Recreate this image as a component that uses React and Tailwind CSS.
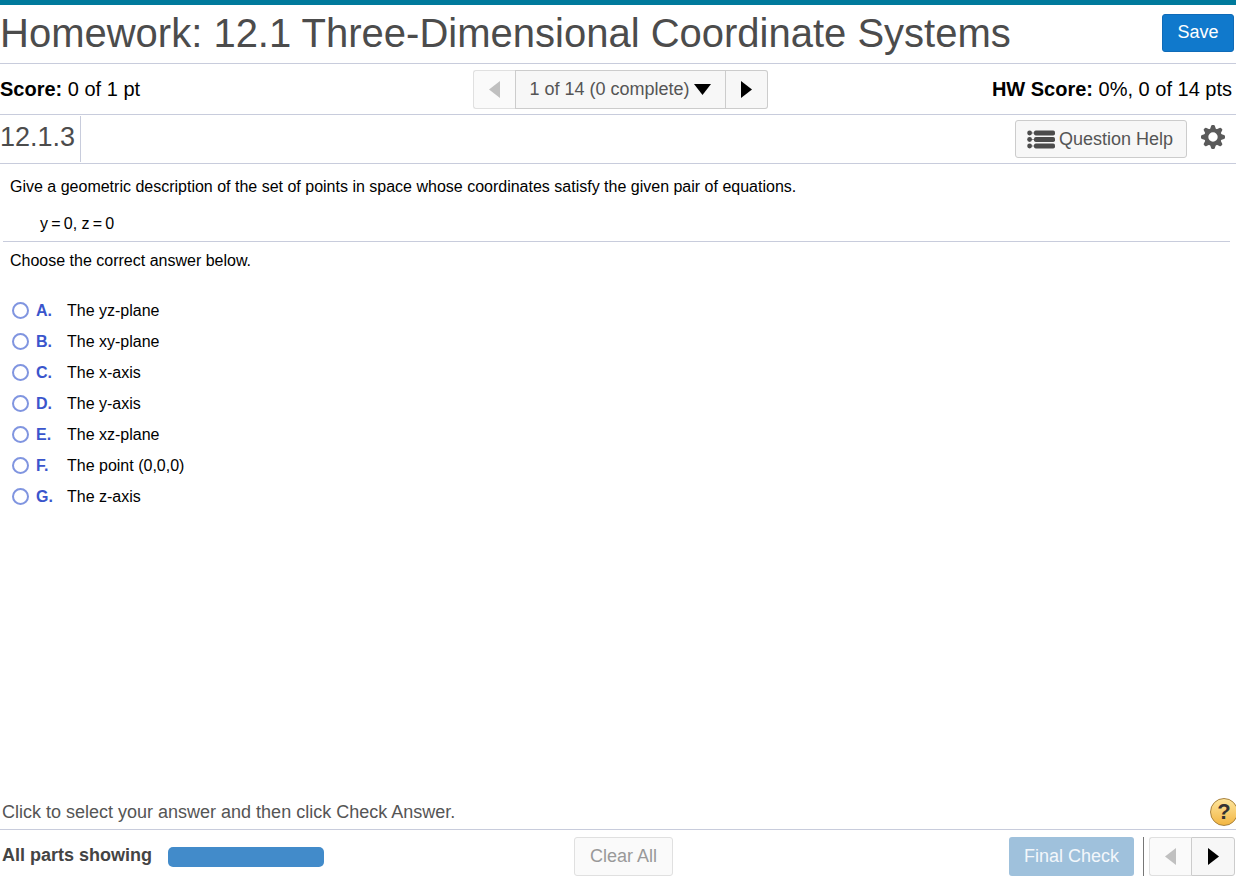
const choices = [
  { letter: "A", text: "The yz-plane" },
  { letter: "B", text: "The xy-plane" },
  { letter: "C", text: "The x-axis" },
  { letter: "D", text: "The y-axis" },
  { letter: "E", text: "The xz-plane" },
  { letter: "F", text: "The point (0,0,0)" },
  { letter: "G", text: "The z-axis" },
];

function Triangle({ direction, className = "" }) {
  const points = {
    left: "11,0 11,17 0,8.5",
    right: "0,0 0,17 11,8.5",
    down: "0,0 17,0 8.5,11",
  }[direction];
  const down = direction === "down";
  return (
    <svg
      aria-hidden="true"
      width={down ? 17 : 11}
      height={down ? 11 : 17}
      className={className}
      fill="currentColor"
    >
      <polygon points={points} />
    </svg>
  );
}

function ListIcon() {
  return (
    <svg aria-hidden="true" width="28" height="19" viewBox="0 0 28 19" fill="#4c4c4c">
      {[3, 9.5, 16].map((y) => (
        <g key={y}>
          <circle cx="2.6" cy={y} r="2.4" />
          <rect x="3" y={y - 0.5} width="5" height="1" opacity="0.6" />
          <rect x="7" y={y - 2.5} width="21" height="5" rx="1.8" />
        </g>
      ))}
    </svg>
  );
}

function GearIcon() {
  return (
    <svg aria-hidden="true" width="24" height="24" viewBox="-12 -12 24 24" fill="#5a5a5a">
      {[0, 45, 90, 135, 180, 225, 270, 315].map((a) => (
        <path
          key={a}
          transform={`rotate(${a})`}
          d="M-3.2-7L-1.9-11Q-1.6-12-0.8-12H0.8Q1.6-12 1.9-11L3.2-7Z"
        />
      ))}
      <path
        fillRule="evenodd"
        d="M0-8.8A8.8 8.8 0 1 1 0 8.8A8.8 8.8 0 1 1 0-8.8ZM0-4.7A4.7 4.7 0 1 0 0 4.7A4.7 4.7 0 1 0 0-4.7Z"
      />
    </svg>
  );
}

export default function App() {
  return (
    <div className="flex min-h-screen flex-col overflow-x-hidden border-t-5 border-[#007a9c] bg-white font-['Liberation_Sans',Arial,sans-serif] text-black">
      <header className="flex items-center justify-between border-b border-[#c8ccdc] pt-[9px] pr-0.5 pb-[11px]">
        <h1 className="text-[40px] leading-[38px] text-[#4c4c4c]">
          Homework: 12.1 Three-Dimensional Coordinate Systems
        </h1>
        <button className="h-[38px] w-[72px] shrink-0 rounded-[3px] border border-[#0f6bb8] bg-[#1079cc] pb-0.5 text-lg text-white">
          Save
        </button>
      </header>

      <section className="grid grid-cols-[1fr_auto_1fr] items-center border-b border-[#c8ccdc] pt-1.5 pb-[5px]">
        <p className="pb-0.5 text-xl leading-6">
          <b>Score:</b> 0 of 1 pt
        </p>
        <nav aria-label="Questions" className="flex pl-1">
          <button
            disabled
            aria-label="Previous question"
            className="flex h-[39px] w-[42px] items-center justify-center rounded-l-[3px] border border-r-0 border-[#e0e0e0] bg-[#fafafa] text-[#c0c0c0]"
          >
            <Triangle direction="left" />
          </button>
          <button className="flex h-[39px] w-[211px] items-center justify-center gap-1 border border-[#ccc] bg-[#f7f7f7] text-[#555]">
            <span className="pb-0.5 text-lg">1 of 14 (0 complete)</span>
            <Triangle direction="down" className="text-black" />
          </button>
          <button
            aria-label="Next question"
            className="flex h-[39px] w-[42px] items-center justify-center rounded-r-[3px] border border-l-0 border-[#ccc] bg-[#f7f7f7]"
          >
            <Triangle direction="right" />
          </button>
        </nav>
        <p className="pr-1 pb-0.5 text-right text-xl leading-6">
          <b>HW Score:</b> 0%, 0 of 14 pts
        </p>
      </section>

      <section className="flex items-center justify-between border-b border-[#c8ccdc] py-px">
        <h2 className="h-[46px] border-r border-[#c8ccdc] pr-[5px] text-[27px] leading-[42px] text-[#4c4c4c]">
          12.1.3
        </h2>
        <div className="flex items-center gap-3.5 pr-[11px]">
          <button className="flex h-[38px] w-[172px] items-center gap-1 rounded-[3px] border border-[#ccc] bg-[#f7f7f7] pl-[11px] text-[#555]">
            <ListIcon />
            <span className="text-lg leading-6">Question Help</span>
          </button>
          <button aria-label="Settings" className="pb-1">
            <GearIcon />
          </button>
        </div>
      </section>

      <main className="flex-1 text-base leading-5">
        <div className="mr-1.5 ml-[3px] border-b border-[#c8ccdc] pt-[13px] pb-[7px] pl-[7px]">
          <p>
            Give a geometric description of the set of points in space whose coordinates satisfy the
            given pair of equations.
          </p>
          <p className="pt-[17px] pl-[30px]">y&thinsp;=&thinsp;0, z&thinsp;=&thinsp;0</p>
        </div>
        <fieldset className="pt-[9px] pl-2.5">
          <legend className="float-left w-full">Choose the correct answer below.</legend>
          <div className="clear-both pt-6">
            {choices.map((c) => (
              <label key={c.letter} className="flex h-[31px] items-center pl-0.5">
                <input
                  type="radio"
                  name="answer"
                  className="size-[17px] appearance-none rounded-full border-2 border-[#8095e0] bg-white checked:bg-[#3a55cc]"
                />
                <b className="w-[38px] pl-[7px] text-[#3a55cc]">{c.letter}.</b>
                <span>{c.text}</span>
              </label>
            ))}
          </div>
        </fieldset>
      </main>

      <div className="flex items-start justify-between border-b border-[#c8ccdc] pb-[3px] pl-0.5">
        <p className="text-lg leading-7 text-[#555]">
          Click to select your answer and then click Check Answer.
        </p>
        <button
          aria-label="Help"
          className="-mr-0.5 size-7 shrink-0 rounded-full border border-[#a8813c] bg-linear-to-b from-[#fde59a] to-[#f2b640] text-[22px] leading-6 font-bold text-[#333]"
        >
          ?
        </button>
      </div>

      <footer className="grid grid-cols-[1fr_auto_1fr] items-center pt-[7px] pr-px pb-1.5">
        <div className="flex items-center gap-4 pl-0.5 text-lg text-[#444]">
          <b className="pb-1">All parts showing</b>
          <div className="h-5 w-[156px] rounded-[5px] bg-[#428bca]" />
        </div>
        <div className="pl-3">
          <button
            disabled
            className="h-[39px] w-[99px] rounded-[3px] border border-[#e0e0e0] bg-[#fafafa] pb-0.5 text-lg text-[#999]"
          >
            Clear All
          </button>
        </div>
        <div className="flex justify-end">
          <button
            disabled
            className="h-[39px] w-[125px] rounded-[3px] bg-[#9fc1dc] pb-0.5 text-lg text-[#f3f7fb]"
          >
            Final Check
          </button>
          <div className="ml-[9px] border-l border-[#777] pl-[5px]">
            <div className="flex">
              <button
                disabled
                aria-label="Previous part"
                className="flex h-[39px] w-[42px] items-center justify-center rounded-l-[3px] border border-r-0 border-[#e0e0e0] bg-[#fafafa] text-[#c0c0c0]"
              >
                <Triangle direction="left" />
              </button>
              <button
                aria-label="Next part"
                className="flex h-[39px] w-11 items-center justify-center rounded-r-[3px] border border-[#ccc] bg-[#f7f7f7]"
              >
                <Triangle direction="right" />
              </button>
            </div>
          </div>
        </div>
      </footer>
    </div>
  );
}
